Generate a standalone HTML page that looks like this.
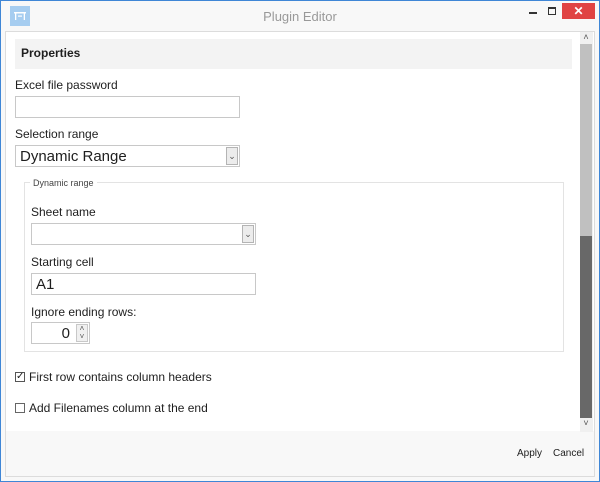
<!DOCTYPE html>
<html><head><style>
*{box-sizing:border-box;margin:0;padding:0}
body{width:600px;height:482px;overflow:hidden;background:#f8f8f8;font-family:"Liberation Sans",sans-serif;font-size:12px;color:#1e1e1e;position:relative}
.a{position:absolute}
.frame{left:0;top:0;width:600px;height:482px;border:1px solid #3f86d6}
.inp{background:#fff;border:1px solid #c8c8c8}
.dd{background:#ececec;border:1px solid #b4b4b4;width:12px;height:18px;top:1px;right:1px;position:absolute;font-size:9px;color:#555;text-align:center;line-height:16px}
</style></head><body>
<div class="a frame"></div>
<div class="a" style="left:10px;top:6px;width:20px;height:20px;background:#a6cdf0"></div>
<svg class="a" style="left:10px;top:6px" width="20" height="20"><rect x="4" y="6" width="12" height="1.5" fill="#fff"/><rect x="5" y="7" width="1.3" height="7" fill="#fff"/><rect x="13.7" y="7" width="1.3" height="7" fill="#fff"/><rect x="8" y="9.5" width="4" height="1.2" fill="#fff"/></svg>
<div class="a" style="left:0;top:9px;width:600px;text-align:center;color:#999;font-size:13px">Plugin Editor</div>
<div class="a" style="left:529px;top:12px;width:8px;height:2px;background:#333"></div>
<div class="a" style="left:548px;top:7px;width:8px;height:8px;border:1px solid #333;border-top-width:2px"></div>
<div class="a" style="left:562px;top:3px;width:33px;height:16px;background:#e04343;color:#fff;text-align:center;font-size:12px;line-height:16px;font-weight:bold">✕</div>
<div class="a" style="left:5px;top:31px;width:590px;height:446px;border:1px solid #dcdcdc;background:#fff"></div>
<div class="a" style="left:6px;top:431px;width:588px;height:45px;background:#f8f8f8"></div>
<div class="a" style="left:15px;top:39px;width:557px;height:30px;background:#f3f3f3"></div>
<div class="a" style="left:21px;top:46px;font-weight:bold">Properties</div>
<div class="a" style="left:15px;top:78px">Excel file password</div>
<div class="a inp" style="left:15px;top:96px;width:225px;height:22px"></div>
<div class="a" style="left:15px;top:127px">Selection range</div>
<div class="a inp" style="left:15px;top:145px;width:225px;height:22px;font-size:15px;padding:2px 4px">Dynamic Range<div class="dd">⌄</div></div>
<div class="a" style="left:24px;top:182px;width:540px;height:170px;border:1px solid #e3e3e3"></div>
<div class="a" style="left:30px;top:178px;background:#fff;padding:0 3px;font-size:9px;color:#444">Dynamic range</div>
<div class="a" style="left:31px;top:205px">Sheet name</div>
<div class="a inp" style="left:31px;top:223px;width:225px;height:22px"><div class="dd">⌄</div></div>
<div class="a" style="left:31px;top:255px">Starting cell</div>
<div class="a inp" style="left:31px;top:273px;width:225px;height:22px;font-size:15px;padding:2px 4px">A1</div>
<div class="a" style="left:31px;top:305px">Ignore ending rows:</div>
<div class="a inp" style="left:31px;top:322px;width:59px;height:22px;font-size:15px;padding:2px 0"><span style="position:absolute;right:19px">0</span><div class="a" style="right:1px;top:1px;width:12px;height:18px;background:#f0f0f0;border:1px solid #c8c8c8;font-size:8px;color:#555;text-align:center;line-height:8px">˄<br>˅</div></div>
<div class="a" style="left:15px;top:372px;width:10px;height:10px;border:1px solid #555;font-size:10px;line-height:8px;text-align:center">✓</div>
<div class="a" style="left:29px;top:370px">First row contains column headers</div>
<div class="a" style="left:15px;top:403px;width:10px;height:10px;border:1px solid #666"></div>
<div class="a" style="left:29px;top:401px">Add Filenames column at the end</div>
<div class="a" style="left:580px;top:32px;width:13px;height:400px;background:#f0f0f0"></div>
<div class="a" style="left:580px;top:44px;width:12px;height:192px;background:#c0c0c0"></div>
<div class="a" style="left:580px;top:236px;width:12px;height:182px;background:#686868"></div>
<div class="a" style="left:580px;top:32px;width:12px;text-align:center;font-size:9px;color:#555">˄</div>
<div class="a" style="left:580px;top:418px;width:12px;text-align:center;font-size:9px;color:#555">˅</div>
<div class="a" style="left:517px;top:448px;font-size:10px">Apply</div>
<div class="a" style="left:553px;top:448px;font-size:10px">Cancel</div>
</body></html>
